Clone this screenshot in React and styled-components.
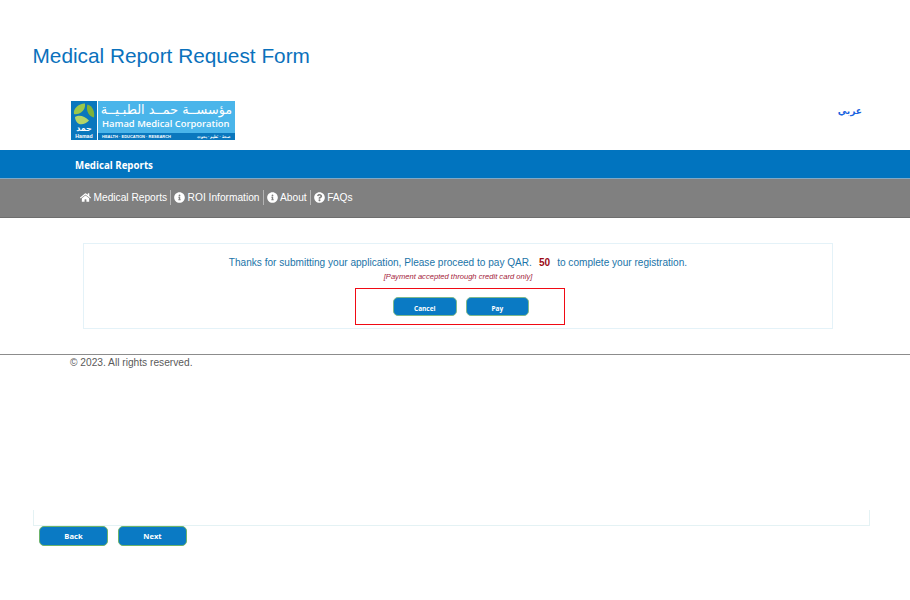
import React from 'react';
import styled, { createGlobalStyle } from 'styled-components';
import { FaHome, FaInfoCircle, FaQuestionCircle } from 'react-icons/fa';

const GlobalStyle = createGlobalStyle`
  html, body {
    margin: 0;
    padding: 0;
    background: #fff;
    font-family: "Liberation Sans", Arial, sans-serif;
  }
`;

const navItems = [
  { label: 'Medical Reports', Icon: FaHome },
  { label: 'ROI Information', Icon: FaInfoCircle },
  { label: 'About', Icon: FaInfoCircle },
  { label: 'FAQs', Icon: FaQuestionCircle },
];

function HamadLeaves() {
  return (
    <svg width="22" height="22" viewBox="0 0 22 22">
      <path d="M1 11C0 6 5 .5 12 .5c.5 4-1 7-4 9-2 1.500-4.500 2-7 1.500z" fill="#9cc84a" />
      <path d="M14.500 1.500c5 1.500 7.500 7 6.500 13-3-.5-5.500-3-6.500-6-.8-2.500-.8-5 0-7z" fill="#7fb23a" />
      <path d="M2 14c3.500-2.500 9.500-1.500 14 3.500-2.500 3-6.500 4.500-10 3.500-2.500-1.500-4-4.500-4-7z" fill="#b5d568" />
    </svg>
  );
}

function Logo() {
  return (
    <LogoBox>
      <LogoMark>
        <HamadLeaves />
        <MarkArabic>حمد</MarkArabic>
        <MarkLatin>Hamad</MarkLatin>
      </LogoMark>
      <LogoBody>
        <LogoArabic>مؤسســة حمــد الطبـيــة</LogoArabic>
        <LogoName>Hamad Medical Corporation</LogoName>
        <LogoStrip>
          <span>HEALTH · EDUCATION · RESEARCH</span>
          <span>صحة · تعليم · بحوث</span>
        </LogoStrip>
      </LogoBody>
    </LogoBox>
  );
}

export default function App() {
  return (
    <Page>
      <GlobalStyle />
      <Title>Medical Report Request Form</Title>
      <Header>
        <Logo />
        <LangLink href="#">عربي</LangLink>
      </Header>
      <BlueBar>Medical Reports</BlueBar>
      <GreyBar>
        {navItems.map(({ label, Icon }) => (
          <NavItem key={label}>
            <Icon size={11} />
            {label}
          </NavItem>
        ))}
      </GreyBar>
      <Panel>
        <Thanks>
          Thanks for submitting your application, Please proceed to pay QAR.
          <Amount>50</Amount>
          to complete your registration.
        </Thanks>
        <Note>[Payment accepted through credit card only]</Note>
        <ActionBox>
          <SmallButton type="button">Cancel</SmallButton>
          <SmallButton type="button">Pay</SmallButton>
        </ActionBox>
      </Panel>
      <Footer>© 2023. All rights reserved.</Footer>
      <FormEnd />
      <WizardButtons>
        <WizardButton type="button">Back</WizardButton>
        <WizardButton type="button">Next</WizardButton>
      </WizardButtons>
    </Page>
  );
}

const Page = styled.div`
  width: 910px;
  height: 600px;
  overflow: hidden;
  background: #fff;
`;

const Title = styled.h1`
  margin: 0;
  padding: 43px 0 0 32.5px;
  height: 58px;
  font-size: 20.8px;
  line-height: 25px;
  font-weight: 400;
  color: #0a71bc;
`;

const Header = styled.div`
  display: flex;
  justify-content: space-between;
  align-items: flex-start;
  height: 49px;
  padding: 0 48px 0 71px;
`;

const LogoBox = styled.div`
  display: flex;
  width: 164px;
  height: 39px;
`;

const LogoMark = styled.div`
  display: flex;
  flex-direction: column;
  align-items: center;
  width: 26px;
  padding-top: 2px;
  box-sizing: border-box;
  background: #0a77bd;
  color: #fff;
`;

const MarkArabic = styled.span`
  font-family: "DejaVu Sans", sans-serif;
  font-size: 8px;
  line-height: 8px;
  font-weight: 700;
`;

const MarkLatin = styled.span`
  font-size: 5.2px;
  line-height: 6px;
  font-weight: 700;
`;

const LogoBody = styled.div`
  display: flex;
  flex-direction: column;
  flex: 1;
  margin-left: 1px;
  background: #4ab5ea;
  color: #fff;
`;

const LogoArabic = styled.div`
  height: 17px;
  font-family: "DejaVu Sans", sans-serif;
  font-size: 12.8px;
  line-height: 18px;
  text-align: center;
  white-space: nowrap;
`;

const LogoName = styled.div`
  height: 13px;
  padding-left: 4px;
  font-family: "Open Sans", sans-serif;
  font-size: 9.4px;
  line-height: 12px;
  font-weight: 600;
  white-space: nowrap;
`;

const LogoStrip = styled.div`
  display: flex;
  justify-content: space-between;
  align-items: center;
  margin-top: auto;
  height: 7px;
  padding: 0 5px 0 4px;
  background: #0a77bd;
  font-size: 4px;
  font-weight: 700;
  white-space: nowrap;
`;

const LangLink = styled.a`
  margin-top: 3px;
  font-family: "DejaVu Sans", sans-serif;
  font-size: 9px;
  line-height: 14px;
  font-weight: 700;
  color: #1a63e0;
  text-decoration: none;
`;

const BlueBar = styled.div`
  height: 29px;
  padding-left: 75px;
  background: #0174bf;
  border-bottom: 1px solid #7fa9c6;
  box-sizing: border-box;
  color: #fff;
  font-family: "Open Sans", sans-serif;
  font-size: 9.7px;
  line-height: 31px;
  font-weight: 700;
`;

const GreyBar = styled.nav`
  display: flex;
  align-items: center;
  height: 39px;
  padding: 0 0 2px 77px;
  box-sizing: border-box;
  background: #808080;
  border-bottom: 1px solid #6e6e6e;
`;

const NavItem = styled.span`
  display: flex;
  align-items: center;
  gap: 2.5px;
  height: 15px;
  padding: 0 3px;
  color: #fff;
  font-size: 10.2px;
  border-right: 1px solid #b4b4b4;
  &:last-child {
    border-right: none;
  }
`;

const Panel = styled.section`
  display: flex;
  flex-direction: column;
  align-items: center;
  width: 750px;
  height: 86px;
  margin: 25px 0 0 83px;
  box-sizing: border-box;
  border: 1px solid #e4f2f8;
`;

const Thanks = styled.p`
  margin: 12px 0 0;
  font-size: 10.08px;
  line-height: 14px;
  color: #1a74a8;
`;

const Amount = styled.strong`
  margin: 0 7px;
  color: #9c0a14;
`;

const Note = styled.p`
  margin: 1px 0 0;
  font-size: 7.6px;
  line-height: 12px;
  font-style: italic;
  color: #a4233a;
`;

const ActionBox = styled.div`
  display: flex;
  justify-content: center;
  gap: 9px;
  width: 210px;
  height: 37px;
  margin: 5px 0 0 4px;
  padding: 8px 0 0 2px;
  box-sizing: border-box;
  border: 1px solid #f00a14;
`;

const SmallButton = styled.button`
  width: 63.5px;
  height: 19px;
  padding: 3px 0 0;
  border: 1px solid #7fb98c;
  border-radius: 5px;
  background: #0a7ac4;
  color: #fff;
  font-family: "Open Sans", sans-serif;
  font-size: 6.5px;
  font-weight: 700;
`;

const Footer = styled.footer`
  height: 26px;
  margin-top: 25px;
  padding-left: 70px;
  border-top: 1px solid #8c8c8c;
  color: #5a5a5a;
  font-size: 10.2px;
  line-height: 15px;
`;

const FormEnd = styled.div`
  width: 837px;
  height: 16px;
  margin: 129px 0 0 33px;
  box-sizing: border-box;
  border: 1px solid #e4f2f4;
  border-top: none;
`;

const WizardButtons = styled.div`
  display: flex;
  gap: 10px;
  padding-left: 39px;
`;

const WizardButton = styled.button`
  width: 69px;
  height: 20px;
  padding: 0;
  border: 1px solid #6db36a;
  border-radius: 5px;
  background: #0a7ac4;
  color: #fff;
  font-family: "Open Sans", sans-serif;
  font-size: 7.6px;
  font-weight: 700;
`;
